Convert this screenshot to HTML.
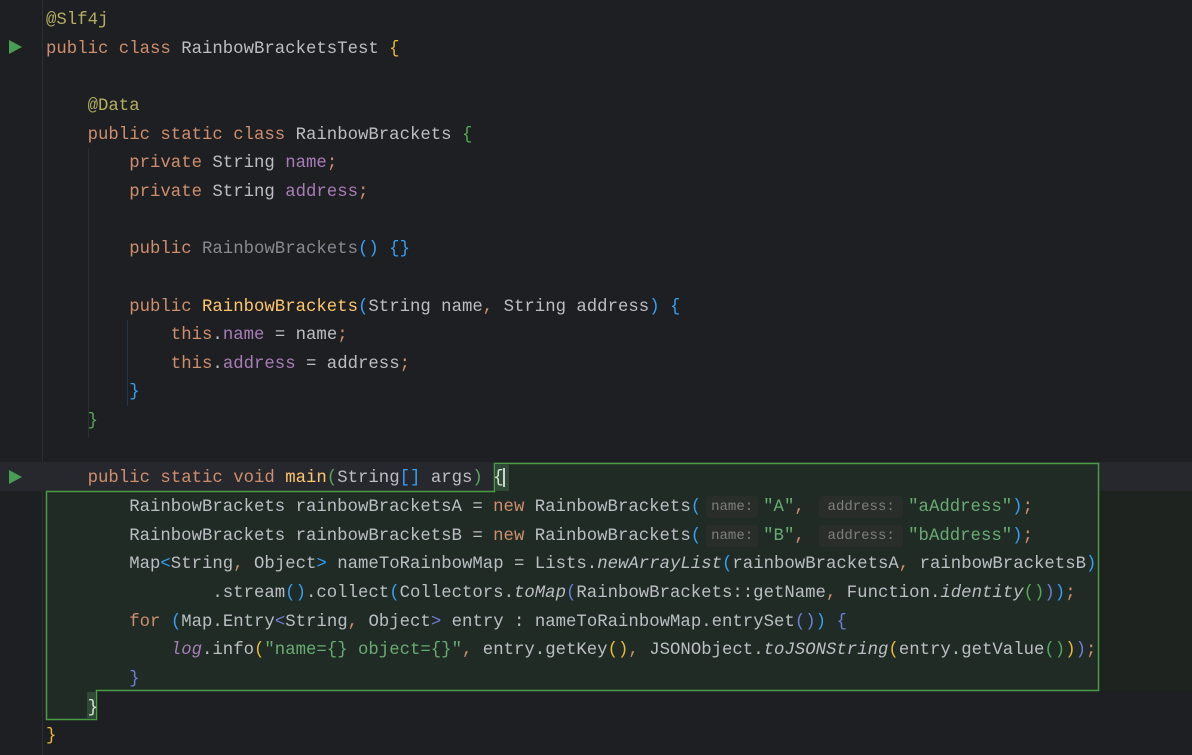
<!DOCTYPE html>
<html><head><meta charset="utf-8"><style>
html,body{margin:0;padding:0;background:#1e1f22;width:1192px;height:755px;overflow:hidden;position:relative}
.l{position:absolute;left:46px;height:28.65px;line-height:28.65px;white-space:pre;font-family:"Liberation Mono",monospace;font-size:17.33px;color:#bcbec4;margin-top:3px}
.k{color:#cf8e6d}.a{color:#b3ae60}.f{color:#a97cb8}.s{color:#6aab73}.m{color:#ffc66d}.g{color:#868a91}
.y{color:#e8ba36}.gr{color:#54a857}.b{color:#359ff4}.p{color:#6e7ed9}.i{font-style:italic}
.h{display:inline-block;height:22px;line-height:22px;background:#2a2e2b;color:#7d8079;font-size:14px;text-align:center;vertical-align:1px;border-radius:3px}
.run{position:absolute;left:9px;width:0;height:0;border-left:13px solid #499c54;border-top:7px solid transparent;border-bottom:7px solid transparent}
.guide{position:absolute;width:1px;background:#2c2e33}
</style></head><body>
<div style="position:absolute;left:42px;top:0;width:1px;height:755px;background:#2b2d30"></div>
<div style="position:absolute;left:0;top:462px;width:1192px;height:29px;background:#26282e"></div>
<div style="position:absolute;left:1099px;top:491px;width:93px;height:200px;background:#1f2320"></div>
<svg style="position:absolute;left:0;top:0" width="1192" height="755">
<polygon points="494.5,463.5 1098.5,463.5 1098.5,690.5 96.5,690.5 96.5,719.5 46.5,719.5 46.5,491.5 494.5,491.5" fill="#1f2b24" stroke="#4a9c47" stroke-width="1.5"/>
<rect x="495" y="464" width="14" height="27" fill="#2f4a36"/>
<rect x="87" y="692" width="9" height="27" fill="#2f4a36"/>
<rect x="503" y="468" width="2" height="19" fill="#cfd1d6"/>
</svg>
<div class="guide" style="left:88px;top:148px;height:290px"></div>
<div class="guide" style="left:127px;top:320px;height:86px;background:#253447"></div>
<div class="run" style="top:40px"></div>
<div class="run" style="top:470px"></div>

<div class="l" style="top:4px"><span class="a">@Slf4j</span></div>
<div class="l" style="top:32.65px"><span class="k">public class </span>RainbowBracketsTest <span class="y">{</span></div>
<div class="l" style="top:90px">    <span class="a">@Data</span></div>
<div class="l" style="top:118.6px">    <span class="k">public static class </span>RainbowBrackets <span class="gr">{</span></div>
<div class="l" style="top:147.25px">        <span class="k">private </span>String <span class="f">name</span><span class="k">;</span></div>
<div class="l" style="top:175.9px">        <span class="k">private </span>String <span class="f">address</span><span class="k">;</span></div>
<div class="l" style="top:233.2px">        <span class="k">public </span><span class="g">RainbowBrackets</span><span class="b">() {}</span></div>
<div class="l" style="top:290.5px">        <span class="k">public </span><span class="m">RainbowBrackets</span><span class="b">(</span>String name<span class="k">, </span>String address<span class="b">)</span> <span class="b">{</span></div>
<div class="l" style="top:319.15px">            <span class="k">this</span>.<span class="f">name</span> = name<span class="k">;</span></div>
<div class="l" style="top:347.8px">            <span class="k">this</span>.<span class="f">address</span> = address<span class="k">;</span></div>
<div class="l" style="top:376.45px">        <span class="b">}</span></div>
<div class="l" style="top:405.1px">    <span class="gr">}</span></div>
<div class="l" style="top:462.4px">    <span class="k">public static void </span><span class="m">main</span><span class="gr">(</span>String<span class="b">[]</span> args<span class="gr">)</span> <span style="color:#d5e8d4">{</span></div>
<div class="l" style="top:491.05px">        RainbowBrackets rainbowBracketsA = <span class="k">new </span>RainbowBrackets<span class="b">(</span><span class="h" style="width:52px;margin:0 5px 0 5px">name:</span><span class="s">"A"</span><span class="k">, </span><span class="h" style="width:84px;margin:0 5px 0 4px">address:</span><span class="s">"aAddress"</span><span class="b">)</span><span class="k">;</span></div>
<div class="l" style="top:519.7px">        RainbowBrackets rainbowBracketsB = <span class="k">new </span>RainbowBrackets<span class="b">(</span><span class="h" style="width:52px;margin:0 5px 0 5px">name:</span><span class="s">"B"</span><span class="k">, </span><span class="h" style="width:84px;margin:0 5px 0 4px">address:</span><span class="s">"bAddress"</span><span class="b">)</span><span class="k">;</span></div>
<div class="l" style="top:548.35px">        Map<span class="b">&lt;</span>String<span class="k">, </span>Object<span class="b">&gt;</span> nameToRainbowMap = Lists.<span class="i">newArrayList</span><span class="b">(</span>rainbowBracketsA<span class="k">, </span>rainbowBracketsB<span class="b">)</span></div>
<div class="l" style="top:577px">                .stream<span class="b">()</span>.collect<span class="b">(</span>Collectors.<span class="i">toMap</span><span class="p">(</span>RainbowBrackets::getName<span class="k">, </span>Function.<span class="i">identity</span><span class="gr">()</span><span class="p">)</span><span class="b">)</span><span class="k">;</span></div>
<div class="l" style="top:605.65px">        <span class="k">for </span><span class="b">(</span>Map.Entry<span class="p">&lt;</span>String<span class="k">, </span>Object<span class="p">&gt;</span> entry : nameToRainbowMap.entrySet<span class="p">()</span><span class="b">)</span> <span class="p">{</span></div>
<div class="l" style="top:634.3px">            <span class="f i">log</span>.info<span class="y">(</span><span class="s">"name={} object={}"</span><span class="k">, </span>entry.getKey<span class="y">()</span><span class="k">, </span>JSONObject.<span class="i">toJSONString</span><span class="y">(</span>entry.getValue<span class="gr">()</span><span class="y">)</span><span class="p">)</span><span class="k">;</span></div>
<div class="l" style="top:662.95px">        <span class="p">}</span></div>
<div class="l" style="top:691.6px">    <span style="color:#d5e8d4">}</span></div>
<div class="l" style="top:720.25px"><span class="y">}</span></div>
</body></html>
